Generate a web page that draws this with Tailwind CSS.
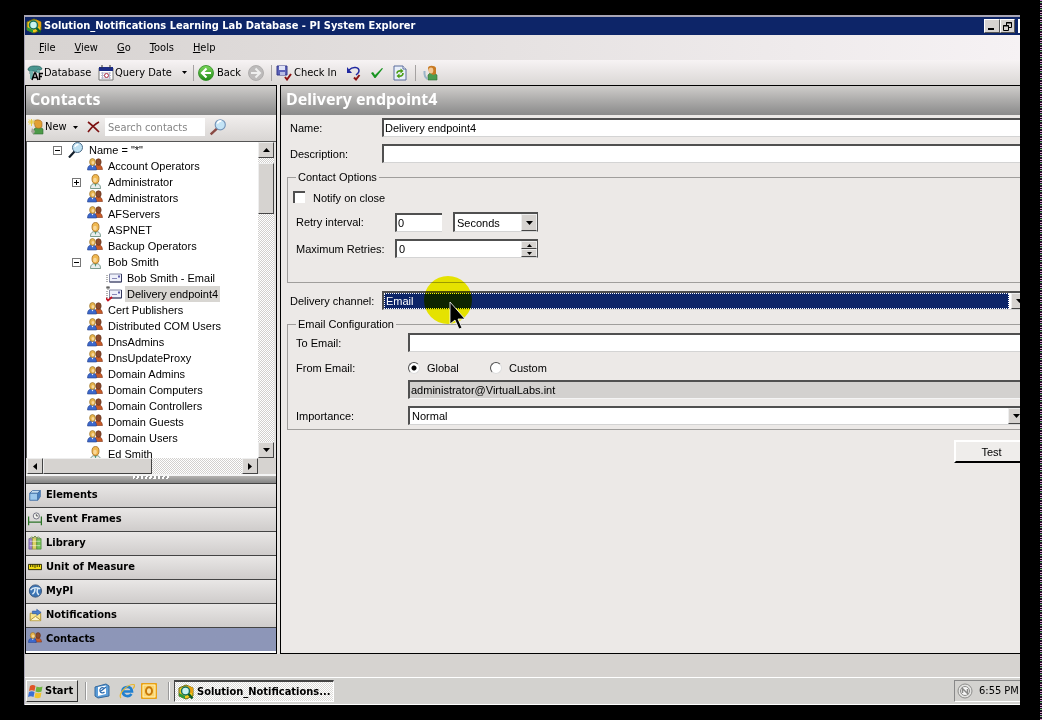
<!DOCTYPE html>
<html lang="en">

<head>
    <meta charset="utf-8">
    <meta name="viewport" content="width=device-width">
    <title>PI System Explorer</title>
    <script src="https://cdn.jsdelivr.net/npm/@tailwindcss/browser@4"></script>
</head>

<body class="bg-black text-black text-[11px] leading-4 font-['DejaVu_Sans_Condensed','DejaVu_Sans',sans-serif]">

    <!-- ICONS -->
    <svg class="absolute size-0" xmlns="http://www.w3.org/2000/svg">
        <linearGradient id="green" x1="0" y1="0" x2="0" y2="1">
            <stop offset="0" stop-color="#7cd65c" />
            <stop offset="1" stop-color="#1f8a17" />
        </linearGradient>
        <symbol id="app" viewBox="0 0 16 16">
            <path d="M1 4 8 1l7 3v8l-7 3-7-3z" fill="#f2c81c" stroke="#6d6a10" />
            <path d="M1 9l6 3v3l-6-3z" fill="#2a9a3c" />
            <path d="M10 1.500l5 2.500v5h-3z" fill="#e8a010" />
            <circle cx="7.500" cy="7" r="4" fill="#c9f2f0" stroke="#16705c" stroke-width="1.500" />
            <path d="M10.500 10l4 4.500" stroke="#0c5a28" stroke-width="2.500" />
        </symbol>
        <symbol id="af" viewBox="0 0 16 16">
            <path d="M1 5c0-3 3-4 6-4 4 0 7 0 8 3l-2 1-2-1-1 3-4-1-2 1v2H3V6z" fill="#4b9690" stroke="#1f5a58" stroke-width=".7" />
            <path d="M3 6h3v8H3zM10 5h3v3h-3z" fill="#6fb0aa" />
            <path d="M5 15l2.500-7h1L11 15M6.500 12.500h3M12.500 15V8.500H16M12.500 11.500H15" fill="none" stroke="#000" stroke-width="1.500" />
        </symbol>
        <symbol id="calendar" viewBox="0 0 16 16">
            <path d="M1 3h14v12H1z" fill="#fff" stroke="#777" />
            <path d="M1 2h14v4H1z" fill="#1c2c86" />
            <path d="M4 0v3M12 0v3" stroke="#333" />
            <path d="M3 8h10M3 10.500h10M3 13h10M4.500 7v7M11.500 7v7" stroke="#b8b8cc" />
            <circle cx="8.500" cy="10.500" r="2" fill="#fff" stroke="#b03048" />
        </symbol>
        <symbol id="back" viewBox="0 0 16 16">
            <circle cx="8" cy="8" r="7.500" fill="url(#green)" stroke="#2c8a20" stroke-width=".8" />
            <path d="M8.500 3.500 4 8l4.500 4.500M4.500 8H13" fill="none" stroke="#fff" stroke-width="2.200" />
        </symbol>
        <symbol id="forward" viewBox="0 0 16 16">
            <circle cx="8" cy="8" r="7.500" fill="#bdbbbb" stroke="#a8a6a6" stroke-width=".8" />
            <path d="M7.500 3.500 12 8l-4.500 4.500M11.500 8H3" fill="none" stroke="#efefef" stroke-width="2" />
        </symbol>
        <symbol id="checkin" viewBox="0 0 16 16">
            <path d="M1 1h10v9H1z" fill="#5c62b8" stroke="#34388a" />
            <path d="M3 1h6v4H3z" fill="#dfe2f6" />
            <path d="M4 7h5v3H4z" fill="#b9bee4" />
            <path d="M9 12l2 2.500L15 9" fill="none" stroke="#8c1414" stroke-width="2" />
        </symbol>
        <symbol id="undo" viewBox="0 0 16 16">
            <path d="M3 5c4-4 10-3 10 1 0 2-2 3-3 4" fill="none" stroke="#2028a0" stroke-width="1.500" />
            <path d="M1 2v6h5z" fill="#2028a0" />
            <path d="M8 12.500l2 2L13.500 10" fill="none" stroke="#8c1414" stroke-width="2" />
        </symbol>
        <symbol id="tick" viewBox="0 0 16 16">
            <path d="M2 8l2-1 2 3 7-7 1 .5L6.500 13H5.500z" fill="#179420" />
        </symbol>
        <symbol id="refresh" viewBox="0 0 16 16">
            <path d="M2 1h9l3 3v11H2z" fill="#e9effa" stroke="#5a6c9c" />
            <path d="M11 1v3h3" fill="#fff" stroke="#5a6c9c" />
            <path d="M5 8.500c0-2 2-3 4-2.500M11 8c0 2.500-2 3.500-4 3" fill="none" stroke="#4b9c14" stroke-width="1.700" />
            <path d="M8.500 3.500l3 2.500-3 2.500zM7.500 13.500l-3-2.500 3-2.500z" fill="#4b9c14" />
        </symbol>
        <symbol id="contact" viewBox="0 0 16 16">
            <path d="M6 10l2-2h4l3 2v5H6z" fill="#4c9c50" stroke="#2c6c34" stroke-width=".6" />
            <path d="M6 3c0-3 7-3 8 0v6l-3 1-4-3z" fill="#c87a24" />
            <ellipse cx="9" cy="5.500" rx="2.300" ry="3" fill="#f2c896" />
            <path d="M2.500 6v3c0 3 2 4 3 5" fill="none" stroke="#9ab4c8" stroke-width="2" />
        </symbol>
        <symbol id="newcontact" viewBox="0 0 16 16">
            <path d="M6 10l3-2h3l3 2v5H5z" fill="#4d9a48" stroke="#2c6c34" stroke-width=".6" />
            <path d="M6 3c0-3 8-3 8 1v3c0 3-7 3-7 0z" fill="#e2a034" stroke="#9a6420" stroke-width=".6" />
            <path d="M4 9l3 3-1 3-3-2z" fill="#a8a49c" />
            <path d="M0 3h7M3.500 0v7M1 .5l5 5M6 .5l-5 5" stroke="#e6cc3c" />
        </symbol>
        <symbol id="search" viewBox="0 0 16 16">
            <path d="M7.500 9 1.500 14.500" stroke="#8a4a44" stroke-width="2.200" />
            <circle cx="10" cy="6" r="4.500" fill="#c4e4f6" stroke="#7494b8" />
            <path d="M7.500 5c.5-2 2-2.500 3.500-2.500" fill="none" stroke="#fff" stroke-width="1.500" />
        </symbol>
        <symbol id="find" viewBox="0 0 16 16">
            <path d="M6.500 9.500 1 15.500" stroke="#14202c" stroke-width="2.200" />
            <circle cx="9.500" cy="5.500" r="5" fill="#bfe2f4" stroke="#4c6c88" />
            <path d="M7 5c.5-2 2-2.500 3.500-2.500" fill="none" stroke="#fff" stroke-width="1.500" />
        </symbol>
        <symbol id="group" viewBox="0 0 16 16">
            <path d="M8 11.500c0-4 1-5 3-5s4 1 4.500 5z" fill="#c85c28" stroke="#7c3014" stroke-width=".6" />
            <ellipse cx="11.500" cy="4" rx="2.700" ry="3.300" fill="#8c4a2c" stroke="#5c2c14" stroke-width=".6" />
            <path d="M.5 12C.5 8.500 2 7 5 7s4.500 1.500 4.500 5z" fill="#3c68cc" stroke="#24408c" stroke-width=".6" />
            <path d="M4.500 7.500h2l-1 2z" fill="#fff" />
            <ellipse cx="5.500" cy="4" rx="2.900" ry="3.500" fill="#e8b44c" stroke="#8c6420" stroke-width=".6" />
            <ellipse cx="6" cy="4.800" rx="1.400" ry="1.700" fill="#f6d69c" />
        </symbol>
        <symbol id="user" viewBox="0 0 16 16">
            <path d="M3.500 14.500c0-4 2-5 5-5s5 1 5 5z" fill="#e8eeee" stroke="#5c8474" stroke-width=".8" />
            <path d="M7.500 10h2l-1 3z" fill="#4c9874" />
            <ellipse cx="8.500" cy="5" rx="3.500" ry="4.500" fill="#f0b850" stroke="#a46c20" stroke-width=".8" />
            <ellipse cx="8" cy="6" rx="1.800" ry="2.200" fill="#fad898" />
        </symbol>
        <symbol id="mail" viewBox="0 0 16 16">
            <path d="M3.500 4h12v8h-12z" fill="#eef0fa" stroke="#8488a4" />
            <path d="M3.500 12h12V4" fill="none" stroke="#34385c" />
            <path d="M6 8.500h5" stroke="#8888b8" />
            <path d="M12 5.500h2v2h-2z" fill="#5c5cac" />
            <path d="M1 5v7" stroke="#666" stroke-dasharray="1 1" />
        </symbol>
        <symbol id="mailcheck" viewBox="0 0 16 16">
            <use href="#mail" />
            <path d="M0 1.500h4M2 0v4M.5 0l3 3M3.500 0l-3 3" stroke="#555" stroke-width=".7" />
            <path d="M0 12l2 2.500 4-3.500" fill="none" stroke="#c41424" stroke-width="1.800" />
        </symbol>
        <symbol id="cube" viewBox="0 0 16 16">
            <path d="M2 6l3-3h9l-3 3z" fill="#d8ecfa" stroke="#3c6ca4" />
            <path d="M11 6l3-3v7l-3 4z" fill="#4c84c4" stroke="#3c6ca4" />
            <path d="M2 6h9v8H2z" fill="#9cc8ec" stroke="#3c6ca4" />
        </symbol>
        <symbol id="event" viewBox="0 0 16 16">
            <path d="M.7 5v10M15.300 5v10M1 11.500h14" stroke="#2c7428" stroke-width="1.400" />
            <circle cx="9.500" cy="4.500" r="3.500" fill="#f4f4f0" stroke="#667" />
            <path d="M9.500 2.500v2h2" fill="none" stroke="#444" />
        </symbol>
        <symbol id="library" viewBox="0 0 16 16">
            <path d="M1 3h4v12H1z" fill="#9c84cc" stroke="#5c4c8c" stroke-width=".7" />
            <path d="M5 2h5v13H5z" fill="#dcd468" stroke="#84842c" stroke-width=".7" />
            <path d="M10 3h5v12h-5z" fill="#78c058" stroke="#3c7c30" stroke-width=".7" />
            <path d="M2 6h12M2 11h12" stroke="#fff" stroke-opacity=".6" />
            <path d="M2 3l2-2 2 1 2-2 2 2 2-1 2 2" fill="none" stroke="#648838" />
        </symbol>
        <symbol id="ruler" viewBox="0 0 16 16">
            <path d="M.5 5h15v6H.5z" fill="#f0dc14" stroke="#1c1c04" />
            <path d="M3 5v3M5.500 5v3M8 5v4M10.500 5v3M13 5v3" stroke="#1c1c04" />
        </symbol>
        <symbol id="mypi" viewBox="0 0 16 16">
            <circle cx="8.500" cy="8" r="7" fill="#3c74b4" stroke="#385478" />
            <path d="M3 7c2-3 7-3 11-1.500M8 5.500c0 4-1 5-3 6M11 5.500c-1 3 0 6 1.500 7" fill="none" stroke="#dcecf8" stroke-width="1.700" />
        </symbol>
        <symbol id="notify" viewBox="0 0 16 16">
            <path d="M2.500 6h12v8.500h-12z" fill="#f8e48c" stroke="#a88c2c" />
            <path d="M2.500 14l6-4.500 6 4.500" fill="#fdf6cc" stroke="#a88c2c" />
            <path d="M5 3.500h5V1.500L15 5l-5 3.500V6.500H5z" fill="#4c80cc" stroke="#24509c" stroke-width=".6" />
        </symbol>
        <symbol id="windows" viewBox="0 0 16 16">
            <path d="M2 3c2-1.500 4-1 5.500 0L6.500 8c-2-1-3.500-1-5.500 0z" fill="#e05426" />
            <path d="M8.500 3.500c2 1 4 1 6 0l-1 5c-2 1-4 1-6 0z" fill="#6cb43c" />
            <path d="M1 9c2-1 3.500-1 5.500 0l-1 5c-2-1-3.500-1-5.500 0z" fill="#3c70d4" />
            <path d="M7.500 9.500c2 1 4 1 6 0l-1 5c-2 1-4 1-6 0z" fill="#f2c42c" />
        </symbol>
        <symbol id="desktop" viewBox="0 0 16 16">
            <path d="M1 4l11-3 3 2v10l-11 2-3-2z" fill="#5a9cd8" stroke="#34689c" />
            <path d="M4 4l8-1.500V11l-8 2z" fill="#fff" />
            <path d="M10 5c-3-1-4.500 1-4 3s3 2.500 4.500 1M7 8l5-4" fill="none" stroke="#2c6cb0" stroke-width="1.300" />
        </symbol>
        <symbol id="ie" viewBox="0 0 16 16">
            <path d="M12.500 11c-3 4-9 2-9-3 0-5 9-6 9.500.5H5" fill="none" stroke="#2080d0" stroke-width="2.600" />
            <path d="M2 15C-1 12 7 1 15 1.500c1 1 0 3-1 4" fill="none" stroke="#e8b830" stroke-width="1.200" />
        </symbol>
        <symbol id="outlook" viewBox="0 0 16 16">
            <path d="M.5.5h15v15H.5z" fill="#f4b420" stroke="#e8a018" />
            <path d="M2 2h12v12H2z" fill="#fbd56c" stroke="#fdeebc" />
            <ellipse cx="8" cy="8" rx="3" ry="3.800" fill="#fbe4a0" stroke="#c87808" stroke-width="2" />
        </symbol>
        <symbol id="tray" viewBox="0 0 16 16">
            <circle cx="8" cy="8" r="7" fill="#e4e4e2" stroke="#8c8c8a" />
            <circle cx="8" cy="8" r="4.500" fill="#f6f6f6" stroke="#8c8c8a" />
            <path d="M5.500 10V5.500l5 5V6" fill="none" stroke="#8a8a88" stroke-width="1.500" />
        </symbol>
        <symbol id="down" viewBox="0 0 7 4"><path d="M0 0h7L3.500 4z" /></symbol>
        <symbol id="up" viewBox="0 0 7 4"><path d="M0 4h7L3.500 0z" /></symbol>
        <symbol id="left" viewBox="0 0 4 7"><path d="M4 0v7L0 3.500z" /></symbol>
        <symbol id="right" viewBox="0 0 4 7"><path d="M0 0v7l4-3.500z" /></symbol>
    </svg>

    <div class="flex h-screen">
        <div class="flex-1 min-w-0 pl-6 pr-5 py-[15px]">

            <!-- WINDOW -->
            <div class="h-full flex flex-col overflow-hidden bg-[#d6d3d0] border-l border-t-2 border-[#a9a6b4]">

                <!-- Title bar -->
                <header class="h-[18px] shrink-0 flex items-center bg-[#0d2568] text-white pl-px">
                    <svg class="size-4"><use href="#app" /></svg>
                    <h1 class="ml-0.5 font-bold whitespace-nowrap">Solution_Notifications Learning Lab Database - PI System Explorer</h1>
                    <div class="ml-auto flex h-[14px] text-black">
                        <button aria-label="Minimize" class="w-4 bg-[#d6d3d0] border border-white border-r-[#555] border-b-[#555] flex items-end justify-center pb-0.5">
                            <span class="w-1.5 h-0.5 bg-black mr-0.5"></span>
                        </button>
                        <button aria-label="Restore" class="w-[15px] bg-[#d6d3d0] border border-white border-r-[#555] border-b-[#555] flex items-center justify-center">
                            <svg class="w-[9px] h-[9px]" viewBox="0 0 9 9" fill="none" stroke="#000">
                                <path d="M3.500 3V.5h5v5H6M3 1h6M.5 3.500h5v5h-5zM0 4h6" />
                            </svg>
                        </button>
                        <button aria-label="Close" class="ml-[3px] w-0.5 bg-white"></button>
                    </div>
                </header>

                <!-- Menu -->
                <nav class="h-[25px] shrink-0 flex items-center gap-[19px] pl-[14px] bg-linear-to-r from-[#d7d3d1] to-[#f6f2f4]">
                    <button><u>F</u>ile</button>
                    <button><u>V</u>iew</button>
                    <button><u>G</u>o</button>
                    <button><u>T</u>ools</button>
                    <button><u>H</u>elp</button>
                </nav>

                <!-- Toolbar -->
                <div class="h-[25px] shrink-0 flex items-center pl-0.5 whitespace-nowrap bg-linear-to-b from-[#f7f3f4] to-[#dad7d5]">
                    <button class="flex items-center gap-px w-[71px]"><svg class="size-4"><use href="#af" /></svg>Database</button>
                    <button class="flex items-center gap-px w-[84px]"><svg class="size-4"><use href="#calendar" /></svg>Query Date</button>
                    <button aria-label="Query date options"><svg class="w-[5px] h-[3px]"><use href="#down" /></svg></button>
                    <span class="w-px h-4 bg-[#a5a2a2] ml-1.5 mr-1"></span>
                    <button class="flex items-center gap-[3px] w-[50px]"><svg class="size-4"><use href="#back" /></svg>Back</button>
                    <button aria-label="Forward"><svg class="size-4"><use href="#forward" /></svg></button>
                    <span class="w-px h-4 bg-[#a5a2a2] ml-[7px] mr-1"></span>
                    <button class="flex items-center gap-0.5 w-[70px]"><svg class="size-4"><use href="#checkin" /></svg>Check In</button>
                    <button aria-label="Undo check out"><svg class="size-4"><use href="#undo" /></svg></button>
                    <button aria-label="Apply" class="ml-[7px]"><svg class="size-4"><use href="#tick" /></svg></button>
                    <button aria-label="Refresh" class="ml-[7px]"><svg class="size-4"><use href="#refresh" /></svg></button>
                    <span class="w-px h-4 bg-[#a5a2a2] ml-[7px] mr-1.5"></span>
                    <button aria-label="My contact"><svg class="size-4"><use href="#contact" /></svg></button>
                </div>

                <!-- Panes -->
                <div class="flex-1 min-h-0 flex gap-[3px] bg-[#e8e5e3]">

                    <!-- CONTACTS -->
                    <aside class="w-[252px] shrink-0 flex flex-col border border-black bg-[#e4e2e0]">
                        <h2 class="h-[29px] shrink-0 flex items-center pl-1 pb-[3px] font-bold text-base text-white bg-linear-to-b from-[#cfcdcb] to-[#8a8a8a] font-['Noto_Sans',sans-serif]">Contacts</h2>
                        <div class="h-[26px] shrink-0 flex items-center pb-0.5 bg-linear-to-b from-[#f2efee] to-[#d8d5d3]">
                            <button class="flex items-center gap-px ml-0.5 w-[45px]"><svg class="size-4 shrink-0"><use href="#newcontact" /></svg>New</button>
                            <button aria-label="New options" class="w-[14px]"><svg class="w-[5px] h-[3px]"><use href="#down" /></svg></button>
                            <button aria-label="Delete">
                                <svg class="w-[13px] h-3" viewBox="0 0 13 12" fill="none" stroke="#7c1010" stroke-width="1.600"><path d="M1 1c4 3 8 7 11 10M12 1C8 3 4 7 1 11" /></svg>
                            </button>
                            <input aria-label="Search contacts" placeholder="Search contacts" class="ml-[5px] w-[100px] h-[18px] bg-white px-[3px] placeholder:text-[#848484]">
                            <button aria-label="Search" class="ml-1"><svg class="size-[18px]"><use href="#search" /></svg></button>
                        </div>

                        <!-- Tree -->
                        <div class="flex-1 min-h-0 flex border-t border-l border-[#555] bg-white">
                            <ul class="flex-1 overflow-hidden font-['Liberation_Sans',Arial,sans-serif] whitespace-nowrap [&>li]:flex [&>li]:items-center [&>li]:h-4 [&>li>svg]:size-4 [&>li>svg]:shrink-0 [&>li>svg]:mr-[5px]">
                                <li class="pl-[26px]">
                                    <button aria-label="Collapse" class="size-[9px] mr-1.5 border border-[#777] flex items-center justify-center"><span class="w-[5px] h-px bg-black"></span></button>
                                    <svg><use href="#find" /></svg>Name = "*"
                                </li>
                                <li class="pl-[60px]"><svg><use href="#group" /></svg>Account Operators</li>
                                <li class="pl-[45px]">
                                    <button aria-label="Expand" class="size-[9px] mr-1.5 border border-[#777]">
                                        <svg class="size-[7px]" viewBox="0 0 7 7" stroke="#000"><path d="M1 3.500h5M3.500 1v5" /></svg>
                                    </button>
                                    <svg><use href="#user" /></svg>Administrator
                                </li>
                                <li class="pl-[60px]"><svg><use href="#group" /></svg>Administrators</li>
                                <li class="pl-[60px]"><svg><use href="#group" /></svg>AFServers</li>
                                <li class="pl-[60px]"><svg><use href="#user" /></svg>ASPNET</li>
                                <li class="pl-[60px]"><svg><use href="#group" /></svg>Backup Operators</li>
                                <li class="pl-[45px]">
                                    <button aria-label="Collapse" class="size-[9px] mr-1.5 border border-[#777] flex items-center justify-center"><span class="w-[5px] h-px bg-black"></span></button>
                                    <svg><use href="#user" /></svg>Bob Smith
                                </li>
                                <li class="pl-[79px]"><svg><use href="#mail" /></svg>Bob Smith - Email</li>
                                <li class="pl-[79px]"><svg><use href="#mailcheck" /></svg><span class="bg-[#d8d6d2] -ml-0.5 px-0.5">Delivery endpoint4</span></li>
                                <li class="pl-[60px]"><svg><use href="#group" /></svg>Cert Publishers</li>
                                <li class="pl-[60px]"><svg><use href="#group" /></svg>Distributed COM Users</li>
                                <li class="pl-[60px]"><svg><use href="#group" /></svg>DnsAdmins</li>
                                <li class="pl-[60px]"><svg><use href="#group" /></svg>DnsUpdateProxy</li>
                                <li class="pl-[60px]"><svg><use href="#group" /></svg>Domain Admins</li>
                                <li class="pl-[60px]"><svg><use href="#group" /></svg>Domain Computers</li>
                                <li class="pl-[60px]"><svg><use href="#group" /></svg>Domain Controllers</li>
                                <li class="pl-[60px]"><svg><use href="#group" /></svg>Domain Guests</li>
                                <li class="pl-[60px]"><svg><use href="#group" /></svg>Domain Users</li>
                                <li class="pl-[60px]"><svg><use href="#user" /></svg>Ed Smith</li>
                            </ul>
                            <div class="w-4 flex flex-col bg-[repeating-conic-gradient(#d2d0ce_0_25%,#fff_0_50%)] bg-[length:2px_2px]">
                                <button aria-label="Scroll up" class="h-4 bg-[#d6d3d0] border border-[#eee] border-r-[#444] border-b-[#444] flex items-center justify-center"><svg class="w-[7px] h-1"><use href="#up" /></svg></button>
                                <div class="mt-[5px] h-[51px] bg-[#d6d3d0] border border-[#eee] border-r-[#444] border-b-[#444]"></div>
                                <button aria-label="Scroll down" class="mt-auto h-4 bg-[#d6d3d0] border border-[#eee] border-r-[#444] border-b-[#444] flex items-center justify-center"><svg class="w-[7px] h-1"><use href="#down" /></svg></button>
                            </div>
                            <div class="w-0.5 bg-[#e4e2e0]"></div>
                        </div>
                        <div class="h-4 shrink-0 flex pl-px pr-[18px] bg-[#d6d3d0]">
                            <div class="flex-1 flex bg-[repeating-conic-gradient(#d2d0ce_0_25%,#fff_0_50%)] bg-[length:2px_2px]">
                                <button aria-label="Scroll left" class="w-4 bg-[#d6d3d0] border border-[#eee] border-r-[#444] border-b-[#444] flex items-center justify-center"><svg class="w-1 h-[7px]"><use href="#left" /></svg></button>
                                <div class="w-[109px] bg-[#d6d3d0] border border-[#eee] border-r-[#444] border-b-[#444]"></div>
                                <button aria-label="Scroll right" class="ml-auto w-4 bg-[#d6d3d0] border border-[#eee] border-r-[#444] border-b-[#444] flex items-center justify-center"><svg class="w-1 h-[7px]"><use href="#right" /></svg></button>
                            </div>
                        </div>

                        <!-- Splitter -->
                        <div class="h-[9px] shrink-0 border-t-2 border-[#f4f4f4] flex items-start justify-center bg-linear-to-b from-[#b4b2b0] to-[#848484]">
                            <div class="w-9 h-[3px] bg-[repeating-linear-gradient(110deg,#fff_0_2px,#999_2px_4px)]"></div>
                        </div>

                        <nav class="shrink-0 pb-0.5 bg-white font-bold [&>a]:flex [&>a]:items-center [&>a]:gap-1 [&>a]:h-6 [&>a]:pl-0.5 [&>a]:pb-0.5 [&>a]:border-t [&>a]:border-[#444] [&>a]:bg-linear-to-b [&>a]:from-[#e9e7e6] [&>a]:to-[#cfcccb] [&_svg]:size-3.5">
                            <a href="#"><svg><use href="#cube" /></svg>Elements</a>
                            <a href="#"><svg><use href="#event" /></svg>Event Frames</a>
                            <a href="#"><svg><use href="#library" /></svg>Library</a>
                            <a href="#"><svg><use href="#ruler" /></svg>Unit of Measure</a>
                            <a href="#"><svg><use href="#mypi" /></svg>MyPI</a>
                            <a href="#"><svg><use href="#notify" /></svg>Notifications</a>
                            <a href="#" class="from-[#8d96b8]! to-[#8d96b8]!"><svg><use href="#group" /></svg>Contacts</a>
                        </nav>
                    </aside>

                    <!-- ENDPOINT -->
                    <main class="flex-1 min-w-0 flex flex-col border border-r-0 border-black bg-[#ece9e7] overflow-hidden">
                        <h2 class="h-[29px] shrink-0 flex items-center pl-[5px] pb-[3px] font-bold text-base text-white bg-linear-to-b from-[#cfcdcb] to-[#8a8a8a] font-['Noto_Sans',sans-serif]">Delivery endpoint4</h2>

                        <form class="pl-1.5 pt-[3px] font-['Liberation_Sans',Arial,sans-serif]">
                            <div class="flex flex-col gap-[7px] pl-[3px]">
                                <div class="flex items-center">
                                    <label for="name" class="w-[92px]">Name:</label>
                                    <input id="name" value="Delivery endpoint4" class="flex-1 h-[19px] bg-white border-t-2 border-l-2 border-b border-[#505050] border-b-[#d4d4d4] px-px">
                                </div>
                                <div class="flex items-center">
                                    <label for="description" class="w-[92px]">Description:</label>
                                    <input id="description" class="flex-1 h-[19px] bg-white border-t-2 border-l-2 border-b border-[#505050] border-b-[#d4d4d4] px-px">
                                </div>
                            </div>

                            <fieldset class="mt-1.5 h-[114px] border border-r-0 border-[#a09e9c] pl-2">
                                <legend class="px-0.5 leading-4">Contact Options</legend>
                                <div class="-ml-[3px] mt-[3px] flex items-center gap-2 h-5">
                                    <input id="notify-close" type="checkbox" class="appearance-none size-3 mb-0.5 bg-white border-t-2 border-l-2 border-[#505050]">
                                    <label for="notify-close">Notify on close</label>
                                </div>
                                <div class="mt-1 flex items-center">
                                    <label for="retry" class="w-[99px]">Retry interval:</label>
                                    <input id="retry" value="0" class="w-[47px] h-[19px] bg-white border-t-2 border-l-2 border-b border-[#505050] border-b-[#d4d4d4] px-px">
                                    <div class="relative ml-[11px] w-[85px]">
                                        <select aria-label="Retry unit" class="block appearance-none w-full h-5 bg-white border border-t-2 border-l-2 border-[#505050] border-b-[#d4d4d4] px-0.5">
                                            <option>Seconds</option>
                                        </select>
                                        <span class="pointer-events-none absolute right-px top-0.5 bottom-px w-4 bg-[#d6d3d0] border border-[#eee] border-b-[#444] flex items-center justify-center"><svg class="w-[7px] h-1"><use href="#down" /></svg></span>
                                    </div>
                                </div>
                                <div class="mt-[7px] flex items-center">
                                    <label for="retries" class="w-[99px]">Maximum Retries:</label>
                                    <div class="flex w-[143px] h-[19px] bg-white border border-t-2 border-l-2 border-[#505050] border-b-[#d4d4d4]">
                                        <input id="retries" value="0" class="flex-1 min-w-0 px-0.5">
                                        <div class="w-4 flex flex-col">
                                            <button type="button" aria-label="Increase" class="flex-1 bg-[#d6d3d0] border border-[#eee] border-b-[#444] flex items-center justify-center"><svg class="w-[5px] h-[3px]"><use href="#up" /></svg></button>
                                            <button type="button" aria-label="Decrease" class="flex-1 bg-[#d6d3d0] border border-[#eee] border-b-[#444] flex items-center justify-center"><svg class="w-[5px] h-[3px]"><use href="#down" /></svg></button>
                                        </div>
                                    </div>
                                </div>
                            </fieldset>

                            <div class="relative mt-2 flex items-center pl-[3px] -mr-2">
                                <label for="channel" class="w-[92px]">Delivery channel:</label>
                                <div class="relative flex-1 h-[19px] bg-white border border-t-2 border-l-2 border-[#505050] border-b-[#d4d4d4] pr-[18px]">
                                    <select id="channel" class="block appearance-none w-full h-4 bg-[#0d2568] text-white leading-3 border border-dotted border-white px-px">
                                        <option>Email</option>
                                    </select>
                                    <span class="pointer-events-none absolute right-0 inset-y-0 w-4 bg-[#d6d3d0] border border-[#eee] border-b-[#444] flex items-center justify-center"><svg class="w-[7px] h-1"><use href="#down" /></svg></span>
                                </div>
                                <!-- Mouse pointer with its highlight -->
                                <span class="pointer-events-none absolute left-[137px] -top-[15px] size-12 rounded-full bg-[#f8f800] mix-blend-multiply"></span>
                                <svg class="pointer-events-none absolute left-[162px] top-2.5 w-[17px] h-[30px]" viewBox="0 0 17 30">
                                    <path d="M1 1v22l5-4 4 9 3-1-4-9h7z" fill="#000" stroke="#fff" stroke-width=".8" />
                                </svg>
                            </div>

                            <fieldset class="mt-1.5 border border-r-0 border-[#a09e9c] pl-2 pb-1">
                                <legend class="px-0.5 leading-4">Email Configuration</legend>
                                <div class="flex items-center mt-px">
                                    <label for="to" class="w-28">To Email:</label>
                                    <input id="to" class="flex-1 h-[19px] bg-white border-t-2 border-l-2 border-b border-[#505050] border-b-[#d4d4d4] px-px">
                                </div>
                                <div class="flex items-center h-7 pt-1">
                                    <span class="w-28">From Email:</span>
                                    <input id="global" name="from" type="radio" checked class="appearance-none size-3 rounded-full bg-white border border-[#505050] border-r-[#ddd] border-b-[#ddd] checked:bg-[radial-gradient(#000_0_2px,#fff_3px)]">
                                    <label for="global" class="ml-[7px] w-[63px]">Global</label>
                                    <input id="custom" name="from" type="radio" class="appearance-none size-3 rounded-full bg-white border border-[#505050] border-r-[#ddd] border-b-[#ddd]">
                                    <label for="custom" class="ml-[7px]">Custom</label>
                                </div>
                                <div class="flex pl-28">
                                    <input aria-label="From address" value="administrator@VirtualLabs.int" readonly class="flex-1 h-[19px] bg-[#d3d1cf] border-t-2 border-l-2 border-b border-[#505050] border-b-[#f4f4f4] px-px">
                                </div>
                                <div class="mt-[7px] flex items-center -mr-1.5">
                                    <label for="importance" class="w-28">Importance:</label>
                                    <div class="relative flex-1">
                                        <select id="importance" class="block appearance-none w-full h-[19px] bg-white border border-t-2 border-l-2 border-[#505050] border-b-[#d4d4d4] px-0.5">
                                            <option>Normal</option>
                                        </select>
                                        <span class="pointer-events-none absolute right-px top-0.5 bottom-px w-[17px] bg-[#d6d3d0] border border-[#eee] border-b-[#444] flex items-center justify-center"><svg class="w-[7px] h-1"><use href="#down" /></svg></span>
                                    </div>
                                </div>
                            </fieldset>

                            <div class="mt-2.5 flex justify-end">
                                <button type="button" class="-mr-[9px] w-[75px] h-[23px] bg-[#efedeb] border-2 border-white border-b-black">Test</button>
                            </div>
                        </form>
                    </main>
                </div>

                <!-- Status bar -->
                <div class="h-[23px] shrink-0"></div>

                <!-- TASKBAR -->
                <footer class="h-7 shrink-0 flex items-center pl-px border-t border-b border-white bg-[#d3d2cf] whitespace-nowrap">
                    <button class="w-[52px] h-[22px] flex items-center gap-px pl-px font-bold border border-white border-r-[#333] border-b-[#333]"><svg class="size-4"><use href="#windows" /></svg>Start</button>
                    <span class="ml-[7px] w-0.5 h-[18px] bg-white border-l border-[#999]"></span>
                    <button aria-label="Show desktop" class="ml-[7px]"><svg class="size-4"><use href="#desktop" /></svg></button>
                    <button aria-label="Internet Explorer" class="ml-[9px]"><svg class="size-4"><use href="#ie" /></svg></button>
                    <button aria-label="Outlook" class="ml-1.5"><svg class="size-4"><use href="#outlook" /></svg></button>
                    <span class="ml-[11px] w-0.5 h-[18px] bg-white border-l border-[#999]"></span>
                    <button class="ml-1 w-40 h-[22px] flex items-center gap-[3px] pl-[3px] font-bold border border-t-2 border-[#444] border-r-white border-b-white bg-[repeating-conic-gradient(#dbdad7_0_25%,#fff_0_50%)] bg-[length:2px_2px]"><svg class="size-4 shrink-0"><use href="#app" /></svg>Solution_Notifications...</button>
                    <div class="ml-auto w-[66px] h-[22px] flex items-center gap-1.5 pl-0.5 border-t border-l border-b border-[#888] border-b-white">
                        <svg class="size-4 shrink-0"><use href="#tray" /></svg>
                        <time>6:55 PM</time>
                    </div>
                </footer>
            </div>
        </div>
        <div class="w-0.5 bg-[repeating-linear-gradient(#c48ad0_0_1px,#102010_1px_2px,#88b890_2px_3px,#201028_3px_5px,#d8a0c8_5px_6px,#000_6px_7px)]"></div>
    </div>
</body>

</html>
